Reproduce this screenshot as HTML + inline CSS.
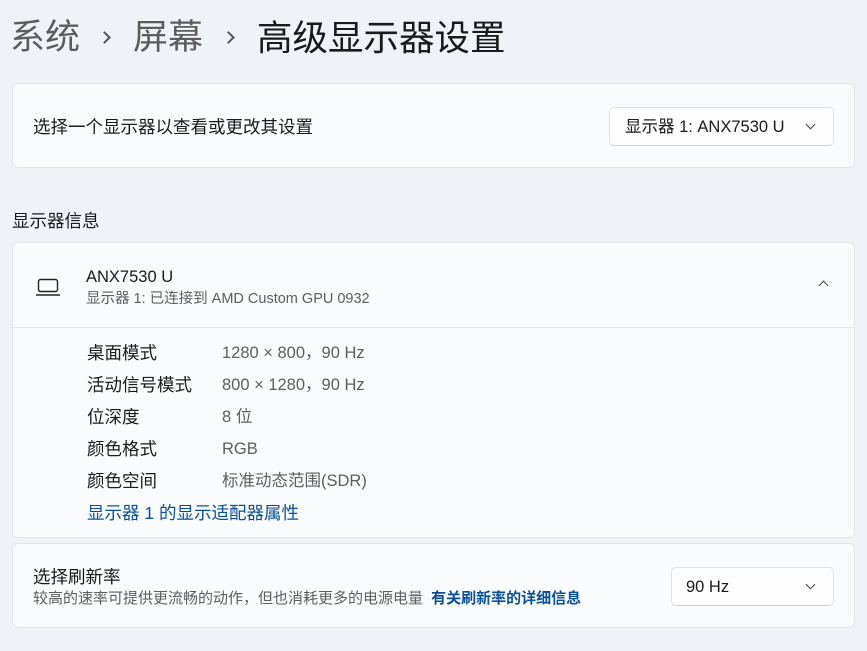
<!DOCTYPE html>
<html><head><meta charset="utf-8"><style>
*{margin:0;padding:0;box-sizing:border-box}
body{width:867px;height:651px;background:#eff2f7;font-family:"Liberation Sans","Noto Sans CJK SC",sans-serif;color:#1b1b1b;position:relative;overflow:hidden}
.a{position:absolute;white-space:nowrap;line-height:22px}
.card{position:absolute;left:12px;width:843px;background:#fafbfd;border:1px solid #e3e6ea;border-radius:6px}
.dd{position:absolute;background:#fdfdfe;border:1px solid #dfe1e4;border-bottom-color:#cfd1d4;border-radius:5px;font-size:16px}
.chev{position:absolute;width:7px;height:7px;border-right:1.2px solid #444;border-bottom:1.2px solid #444;transform:rotate(45deg)}
.lbl{font-size:17.5px}
.val{font-size:16.5px;color:#5e5e5e}
.bc{position:absolute;width:9px;height:9px;border-right:2px solid #555;border-top:2px solid #555;transform:rotate(45deg)}
</style></head><body>
<div class="a" style="left:10px;top:18px;font-size:35px;line-height:40px;color:#5c5c5c">系统</div>
<span class="bc" style="left:100px;top:33px"></span>
<div class="a" style="left:133px;top:18px;font-size:35px;line-height:40px;color:#5c5c5c">屏幕</div>
<span class="bc" style="left:224px;top:33px"></span>
<div class="a" style="left:257px;top:18px;font-size:35.5px;line-height:40px;color:#1a1a1a">高级显示器设置</div>

<div class="card" style="top:83px;height:85px"></div>
<div class="a" style="left:33px;top:116px;font-size:17.5px">选择一个显示器以查看或更改其设置</div>
<div class="dd" style="left:609px;top:107px;width:225px;height:39px"><span class="a" style="left:15px;top:8px;font-size:16.5px">显示器 1: ANX7530 U</span><span class="chev" style="left:197px;top:13px"></span></div>

<div class="a" style="left:12px;top:210px;font-size:17.5px">显示器信息</div>
<div class="card" style="top:242px;height:296px"></div>
<div style="position:absolute;left:13px;top:327px;width:841px;height:1px;background:#e5e7ea"></div>
<svg class="a" style="left:36px;top:278px" width="26" height="20" viewBox="0 0 26 20"><rect x="2.5" y="1.5" width="19" height="12" rx="2" fill="none" stroke="#222" stroke-width="1.4"/><line x1="0" y1="17" x2="24" y2="17" stroke="#222" stroke-width="1.6"/></svg>
<div class="a" style="left:86px;top:266px;font-size:16.5px">ANX7530 U</div>
<div class="a" style="left:86px;top:288px;font-size:14.5px;color:#5e5e5e">显示器 1: 已连接到 AMD Custom GPU 0932</div>
<span class="chev" style="left:820px;top:282px;transform:rotate(-135deg)"></span>
<div class="a lbl" style="left:87px;top:342px">桌面模式</div><div class="a val" style="left:222px;top:342px">1280 × 800，90 Hz</div>
<div class="a lbl" style="left:87px;top:374px">活动信号模式</div><div class="a val" style="left:222px;top:374px">800 × 1280，90 Hz</div>
<div class="a lbl" style="left:87px;top:406px">位深度</div><div class="a val" style="left:222px;top:406px">8 位</div>
<div class="a lbl" style="left:87px;top:438px">颜色格式</div><div class="a val" style="left:222px;top:438px">RGB</div>
<div class="a lbl" style="left:87px;top:470px">颜色空间</div><div class="a val" style="left:222px;top:470px">标准动态范围(SDR)</div>
<div class="a" style="left:87px;top:502px;font-size:17.5px;color:#0a4f9c">显示器 1 的显示适配器属性</div>

<div class="card" style="top:543px;height:85px"></div>
<div class="a" style="left:33px;top:566px;font-size:17.5px">选择刷新率</div>
<div class="a" style="left:33px;top:588px;font-size:15px;color:#5e5e5e">较高的速率可提供更流畅的动作，但也消耗更多的电源电量 <span style="color:#0a4f9c;font-weight:bold;margin-left:4px">有关刷新率的详细信息</span></div>
<div class="dd" style="left:671px;top:567px;width:163px;height:39px"><span class="a" style="left:14px;top:8px;font-size:16.5px">90 Hz</span><span class="chev" style="left:135px;top:13px"></span></div>
</body></html>
